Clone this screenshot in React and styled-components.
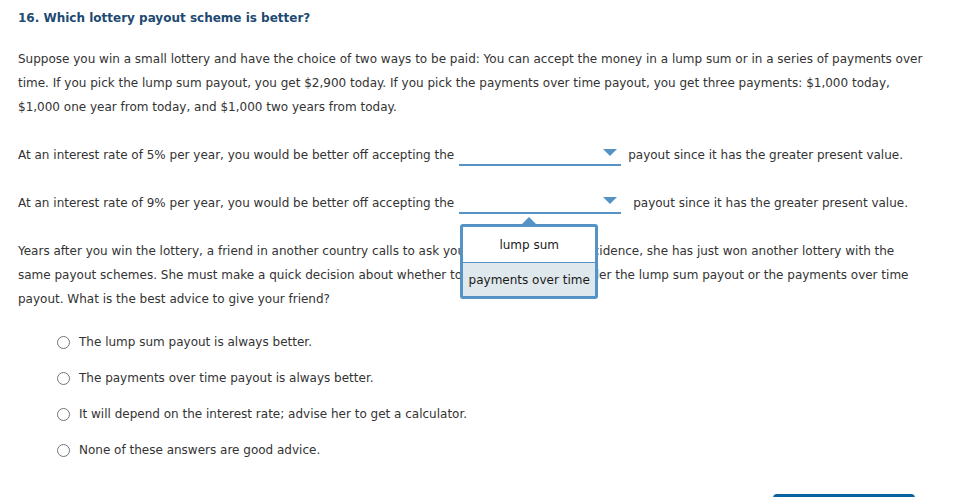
import React from 'react'
import styled, { createGlobalStyle } from 'styled-components'

const GlobalStyle = createGlobalStyle`
  body {
    margin: 0;
    background: #fff;
    font-family: "DejaVu Sans", Verdana, sans-serif;
    font-size: 12px;
    color: #333;
  }
`

const Page = styled.div`
  padding: 8px 0 0 18px;
  width: 912px;
  height: 489px;
  overflow: hidden;
`

const Title = styled.h2`
  margin: 0;
  font-size: 12px;
  line-height: 20px;
  font-weight: bold;
  color: #1d4a72;
`

const Para = styled.p`
  margin: ${props => props.$top || 24}px 0 0 0;
  line-height: 24px;
`

const Line = styled.div`
  margin-top: 24px;
  line-height: 24px;
  display: flex;
  align-items: flex-end;
  white-space: nowrap;
`

const SelectWrap = styled.span`
  position: relative;
  display: inline-block;
  width: 162px;
  height: 20px;
  margin: 0 ${props => props.$gap || 7}px 1px 5px;
  border-bottom: 2px solid #5592c6;
`

const Caret = styled.span`
  position: absolute;
  right: 4px;
  top: 5px;
  width: 0;
  height: 0;
  border-left: 7px solid transparent;
  border-right: 7px solid transparent;
  border-top: 7px solid #5592c6;
`

const Popup = styled.div`
  position: absolute;
  left: 1px;
  top: 32px;
  width: 132px;
  border: 3px solid #5592c6;
  border-radius: 3px;
  background: #fff;
  z-index: 5;

  &::before {
    content: '';
    position: absolute;
    top: -10px;
    left: 59px;
    border-left: 7px solid transparent;
    border-right: 7px solid transparent;
    border-bottom: 7px solid #5592c6;
  }
`

const Option = styled.div`
  height: ${props => props.$h}px;
  display: flex;
  align-items: center;
  justify-content: center;
  color: #1a1a1a;
  font-size: 12px;
  background: ${props => (props.$active ? '#dfe8ec' : '#fff')};
  border-top: ${props => (props.$active ? '1px solid #5592c6' : 'none')};
`

const Choices = styled.div`
  margin-top: 13px;
  padding-left: 39px;
`

const Choice = styled.label`
  display: flex;
  align-items: center;
  height: 36px;
  gap: 9px;
`

const Radio = styled.span`
  width: 11px;
  height: 11px;
  border: 1px solid #767676;
  border-radius: 50%;
  flex-shrink: 0;
`

const Footer = styled.div`
  margin-top: 26px;
  display: flex;
  justify-content: flex-end;
  padding-right: 15px;
`

const Submit = styled.button`
  width: 142px;
  height: 36px;
  border: none;
  border-radius: 4px;
  background: #0b62a0;
  color: #fff;
`

const choices = [
  'The lump sum payout is always better.',
  'The payments over time payout is always better.',
  'It will depend on the interest rate; advise her to get a calculator.',
  'None of these answers are good advice.'
]

const App = () => (
  <Page>
    <GlobalStyle />
    <Title>16. Which lottery payout scheme is better?</Title>
    <Para $top={19}>
      Suppose you win a small lottery and have the choice of two ways to be paid: You can accept the money in a lump sum or in a series of payments over time. If you pick the lump sum payout, you get $2,900 today. If you pick the payments over time payout, you get three payments: $1,000 today, $1,000 one year from today, and $1,000 two years from today.
    </Para>
    <Line>
      At an interest rate of 5% per year, you would be better off accepting the
      <SelectWrap>
        <Caret />
      </SelectWrap>
      payout since it has the greater present value.
    </Line>
    <Line>
      At an interest rate of 9% per year, you would be better off accepting the
      <SelectWrap $gap={12}>
        <Caret />
        <Popup>
          <Option $h={35}>lump sum</Option>
          <Option $h={33} $active>payments over time</Option>
        </Popup>
      </SelectWrap>
      payout since it has the greater present value.
    </Line>
    <Para>
      Years after you win the lottery, a friend in another country calls to ask your advice. By wild coincidence, she has just won another lottery with the same payout schemes. She must make a quick decision about whether to take the winnings under the lump sum payout or the payments over time payout. What is the best advice to give your friend?
    </Para>
    <Choices>
      {choices.map(c => (
        <Choice key={c}>
          <Radio />
          {c}
        </Choice>
      ))}
    </Choices>
    <Footer>
      <Submit />
    </Footer>
  </Page>
)

export default App
